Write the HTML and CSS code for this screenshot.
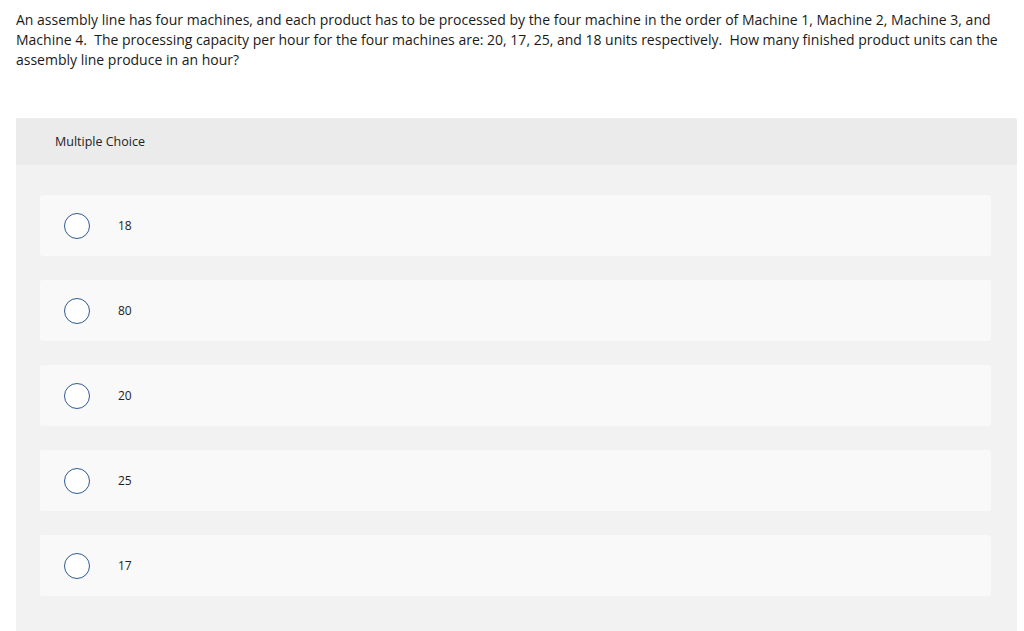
FILE: index.html
```html
<!DOCTYPE html>
<html>
<head>
<meta charset="utf-8">
<link rel="stylesheet" href="styles.css">
</head>
<body>
<div class="page">
  <p class="question">An assembly line has four machines, and each product has to be processed by the four machine in the order of Machine 1, Machine 2, Machine 3, and Machine 4.&nbsp; The processing capacity per hour for the four machines are: 20, 17, 25, and 18 units respectively.&nbsp; How many finished product units can the assembly line produce in an hour?</p>
  <div class="panel">
    <div class="panel-head">Multiple Choice</div>
    <div class="panel-body">
      <div class="option"><span class="radio"></span><span class="label">18</span></div>
      <div class="option"><span class="radio"></span><span class="label">80</span></div>
      <div class="option"><span class="radio"></span><span class="label">20</span></div>
      <div class="option"><span class="radio"></span><span class="label">25</span></div>
      <div class="option"><span class="radio"></span><span class="label">17</span></div>
    </div>
  </div>
</div>
</body>
</html>
```

FILE: styles.css
```css
html, body {
  margin: 0;
  padding: 0;
  background: #ffffff;
}
body {
  font-family: "Open Sans", "Liberation Sans", sans-serif;
  color: #1a1a1a;
}
.page {
  padding: 10px 7px 0 16px;
}
.question {
  margin: 0;
  font-size: 14px;
  line-height: 20px;
  color: #1a1a1a;
}
.panel {
  margin-top: 48px;
  border-radius: 0 3px 0 0;
  overflow: hidden;
  background: #f2f2f2;
}
.panel-head {
  height: 47px;
  background: #ebebeb;
  padding-left: 39px;
  font-size: 12.5px;
  line-height: 47px;
  color: #222;
}
.panel-body {
  padding: 30px 26px 40px 24px;
  display: flex;
  flex-direction: column;
  gap: 24px;
}
.option {
  height: 61px;
  background: #f9f9f9;
  border-radius: 3px;
  display: flex;
  align-items: center;
  padding-left: 24px;
}
.radio {
  width: 24px;
  height: 24px;
  border: 1px solid #2d5a94;
  border-radius: 50%;
  background: #ffffff;
  flex: none;
}
.label {
  margin-left: 28px;
  font-size: 12px;
  color: #222;
}
```
